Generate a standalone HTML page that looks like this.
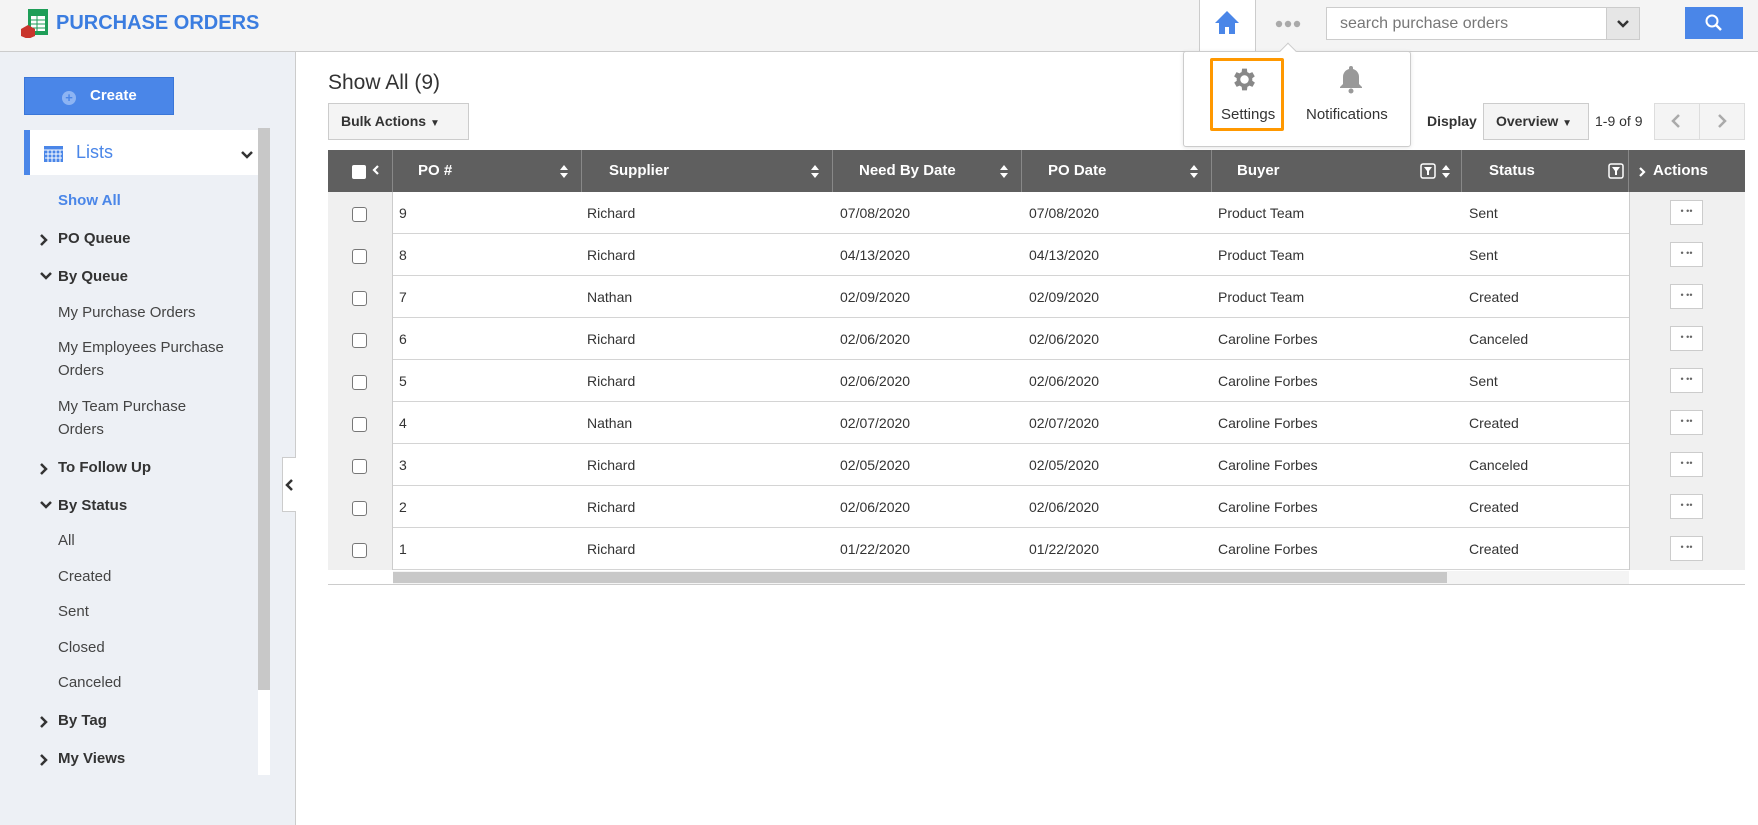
<!DOCTYPE html><html><head><style>
*{box-sizing:border-box;margin:0;padding:0}
body{width:1758px;height:825px;overflow:hidden;font-family:"Liberation Sans",Arial,sans-serif;background:#fff;position:relative;color:#333}
.a{position:absolute}
.hdr{left:0;top:0;width:1758px;height:52px;background:#f4f4f4;border-bottom:1px solid #ccc}
.side{left:0;top:52px;width:296px;height:773px;background:#edf0f5;border-right:1px solid #ccc}
.si{position:absolute;left:58px;font-size:15px;color:#444}
.sb{font-weight:bold;color:#333}
.chev{position:absolute;left:39px}
.th{top:150px;height:42px;background:#5f5f5f;color:#fff;font-weight:bold;font-size:15px;line-height:42px;border-right:1px solid #888}
.row{left:328px;width:1417px;height:42px;border-bottom:1px solid #d4d4d4;font-size:14px;line-height:42px}
.c{position:absolute;top:0}
.cb{position:absolute;left:24px;top:15px;width:15px;height:15px;border:1px solid #777;border-radius:3px;background:#fff}
.act{position:absolute;left:1301px;top:0;width:116px;height:42px;background:#f0f0f0;border-left:1px solid #ccc}
.ab{position:absolute;left:40px;top:8px;width:33px;height:25px;border:1px solid #ccc;background:#fff;font-size:9px;line-height:20px;text-align:center;color:#666}
.sort{position:absolute;top:15px}
</style></head><body>
<div class="a hdr"></div>
<svg class="a" style="left:20px;top:8px" width="30" height="30"><rect x="8" y="1" width="20" height="26" fill="#1e9e58"/><rect x="11" y="8" width="14" height="15" fill="#fff"/><path d="M11 12h14M11 16h14M11 20h14M17 8v15" stroke="#1e9e58"/><path d="M1 21l7-4 7 4v7l-7 3-7-3z" fill="#c9352c"/></svg>
<div class="a" style="left:56px;top:12px;font-size:20px;font-weight:bold;color:#3b7de0">PURCHASE ORDERS</div>
<div class="a" style="left:1199px;top:0;width:57px;height:53px;background:#fff;border-left:1px solid #ccc;border-right:1px solid #ccc"></div>
<svg class="a" style="left:1213px;top:9px" width="28" height="28"><path d="M14 2L2 14h4v11h6v-7h4v7h6V14h4z" fill="#4a86e8"/></svg>
<svg class="a" style="left:1275px;top:20px" width="26" height="8"><circle cx="4" cy="4" r="3.2" fill="#aaa"/><circle cx="13" cy="4" r="3.2" fill="#aaa"/><circle cx="22" cy="4" r="3.2" fill="#aaa"/></svg>
<div class="a" style="left:1326px;top:7px;width:314px;height:33px;border:1px solid #ccc;background:#fff;font-size:16px;color:#777;line-height:31px;padding-left:13px">search purchase orders</div>
<div class="a" style="left:1606px;top:8px;width:33px;height:31px;background:#e6e6e6;border-left:1px solid #ccc"></div>
<svg class="a" style="left:1616px;top:19px" width="14" height="10"><path d="M2 2l5 5 5-5" stroke="#333" stroke-width="2.5" fill="none"/></svg>
<div class="a" style="left:1685px;top:7px;width:58px;height:32px;background:#4a86e8"></div>
<svg class="a" style="left:1704px;top:13px" width="20" height="20"><circle cx="8" cy="8" r="5.5" stroke="#fff" stroke-width="2" fill="none"/><path d="M12 12l5 5" stroke="#fff" stroke-width="2.5"/></svg>

<div class="a side"></div>
<div class="a" style="left:24px;top:77px;width:150px;height:38px;background:#4a86e8;border:1px solid #3a76d8;color:#fff;font-weight:bold;font-size:15px;line-height:36px"><span style="display:inline-block;margin-left:37px;width:14px;height:14px;border-radius:7px;background:#8db4f3;vertical-align:-2px;color:#4a86e8;font-size:13px;line-height:14px;text-align:center">+</span><span style="margin-left:14px">Create</span></div>
<div class="a" style="left:24px;top:130px;width:234px;height:45px;background:#fff;border-left:6px solid #4a86e8"></div>
<svg class="a" style="left:44px;top:146px" width="19" height="16"><rect width="19" height="16" fill="#4a86e8"/><path d="M0 4h19M1 8h17M1 12h17M4 4v12M8 4v12M12 4v12M16 4v12" stroke="#fff" stroke-width="1"/></svg>
<div class="a" style="left:76px;top:142px;font-size:18px;color:#4a86e8">Lists</div>
<svg class="a" style="left:240px;top:150px" width="14" height="10"><path d="M2 2l5 5 5-5" stroke="#333" stroke-width="2.5" fill="none"/></svg>
<div class="a" style="left:258px;top:128px;width:12px;height:647px;background:#fff"></div>
<div class="a" style="left:258px;top:128px;width:12px;height:562px;background:#c8c8c8"></div>
<div class="si sb" style="top:192px;color:#4a86e8">Show All</div>
<svg class="chev" style="top:233px" width="10" height="14"><path d="M2 2l5 5-5 5" stroke="#333" stroke-width="2.5" fill="none"/></svg><div class="si sb" style="top:230px">PO Queue</div>
<svg class="chev" style="top:271px" width="14" height="10"><path d="M2 2l5 5 5-5" stroke="#333" stroke-width="2.5" fill="none"/></svg><div class="si sb" style="top:268px">By Queue</div>
<div class="si" style="top:304px">My Purchase Orders</div>
<div class="si" style="top:339px">My Employees Purchase</div><div class="si" style="top:362px">Orders</div>
<div class="si" style="top:398px">My Team Purchase</div><div class="si" style="top:421px">Orders</div>
<svg class="chev" style="top:462px" width="10" height="14"><path d="M2 2l5 5-5 5" stroke="#333" stroke-width="2.5" fill="none"/></svg><div class="si sb" style="top:459px">To Follow Up</div>
<svg class="chev" style="top:500px" width="14" height="10"><path d="M2 2l5 5 5-5" stroke="#333" stroke-width="2.5" fill="none"/></svg><div class="si sb" style="top:497px">By Status</div>
<div class="si" style="top:532px">All</div>
<div class="si" style="top:568px">Created</div>
<div class="si" style="top:603px">Sent</div>
<div class="si" style="top:639px">Closed</div>
<div class="si" style="top:674px">Canceled</div>
<svg class="chev" style="top:715px" width="10" height="14"><path d="M2 2l5 5-5 5" stroke="#333" stroke-width="2.5" fill="none"/></svg><div class="si sb" style="top:712px">By Tag</div>
<svg class="chev" style="top:753px" width="10" height="14"><path d="M2 2l5 5-5 5" stroke="#333" stroke-width="2.5" fill="none"/></svg><div class="si sb" style="top:750px">My Views</div>
<div class="a" style="left:282px;top:457px;width:14px;height:55px;background:#fff;border:1px solid #ccc;border-right:none"></div>
<svg class="a" style="left:285px;top:478px" width="9" height="14"><path d="M7 2L2 7l5 5" stroke="#333" stroke-width="2.5" fill="none"/></svg>

<div class="a" style="left:328px;top:71px;font-size:21px;color:#333">Show All (9)</div>
<div class="a" style="left:328px;top:103px;width:141px;height:37px;background:#f4f4f4;border:1px solid #ccc;font-weight:bold;font-size:14px;line-height:35px;padding-left:12px">Bulk Actions <span style="font-size:10px">▼</span></div>
<div class="a" style="left:1427px;top:113px;font-weight:bold;font-size:14px">Display</div>
<div class="a" style="left:1483px;top:103px;width:106px;height:37px;background:#f4f4f4;border:1px solid #ccc;font-weight:bold;font-size:14px;line-height:35px;padding-left:12px">Overview <span style="font-size:10px">▼</span></div>
<div class="a" style="left:1595px;top:113px;font-size:14px">1-9 of 9</div>
<div class="a" style="left:1654px;top:103px;width:91px;height:37px;background:#f4f4f4;border:1px solid #ddd"></div>
<div class="a" style="left:1699px;top:103px;width:1px;height:37px;background:#ddd"></div>
<svg class="a" style="left:1671px;top:113px" width="10" height="16"><path d="M8 2L2 8l6 6" stroke="#aaa" stroke-width="2.5" fill="none"/></svg>
<svg class="a" style="left:1717px;top:113px" width="10" height="16"><path d="M2 2l6 6-6 6" stroke="#aaa" stroke-width="2.5" fill="none"/></svg>

<div class="a th" style="left:328px;width:65px;"><div style="position:absolute;left:24px;top:15px;width:14px;height:14px;background:#fff;border-radius:2px"></div><svg style="position:absolute;left:44px;top:14px" width="8" height="12"><path d="M6 2L2 6l4 4" stroke="#fff" stroke-width="2.2" fill="none"/></svg></div>
<div class="a th" style="left:393px;width:189px;padding-left:25px">PO #<svg class="sort" style="right:12px" width="10" height="13"><path d="M5 0l4 5H1zM5 13l4-5H1z" fill="#fff"/></svg></div>
<div class="a th" style="left:582px;width:251px;padding-left:27px">Supplier<svg class="sort" style="right:12px" width="10" height="13"><path d="M5 0l4 5H1zM5 13l4-5H1z" fill="#fff"/></svg></div>
<div class="a th" style="left:833px;width:189px;padding-left:26px">Need By Date<svg class="sort" style="right:12px" width="10" height="13"><path d="M5 0l4 5H1zM5 13l4-5H1z" fill="#fff"/></svg></div>
<div class="a th" style="left:1022px;width:190px;padding-left:26px">PO Date<svg class="sort" style="right:12px" width="10" height="13"><path d="M5 0l4 5H1zM5 13l4-5H1z" fill="#fff"/></svg></div>
<div class="a th" style="left:1212px;width:250px;padding-left:25px">Buyer<svg class="sort" style="right:25px;top:13px" width="16" height="16"><rect x="1" y="1" width="14" height="14" rx="2" stroke="#fff" stroke-width="1.5" fill="none"/><path d="M4 4h8l-3 4v4H7V8z" fill="#fff"/></svg><svg class="sort" style="right:10px" width="10" height="13"><path d="M5 0l4 5H1zM5 13l4-5H1z" fill="#fff"/></svg></div>
<div class="a th" style="left:1462px;width:167px;padding-left:27px">Status<svg class="sort" style="right:4px;top:13px" width="16" height="16"><rect x="1" y="1" width="14" height="14" rx="2" stroke="#fff" stroke-width="1.5" fill="none"/><path d="M4 4h8l-3 4v4H7V8z" fill="#fff"/></svg></div>
<div class="a th" style="left:1629px;width:116px;padding-left:24px;border-right:none">Actions<svg style="position:absolute;left:9px;top:16px" width="8" height="12"><path d="M2 2l4 4-4 4" stroke="#fff" stroke-width="2.2" fill="none"/></svg></div>

<div id="rows"></div>
<div class="a" style="left:393px;top:571px;width:1236px;height:13px;background:#f4f4f4"></div>
<div class="a" style="left:393px;top:572px;width:1054px;height:11px;background:#c8c8c8"></div>
<div class="a" style="left:328px;top:584px;width:1417px;height:1px;background:#ccc"></div>

<div class="a" style="left:1183px;top:51px;width:228px;height:96px;background:#fff;border:1px solid #ccc;border-radius:3px;box-shadow:0 1px 4px rgba(0,0,0,.1)"></div>
<div class="a" style="left:1282px;top:45px;width:12px;height:12px;background:#fff;border-left:1px solid #ccc;border-top:1px solid #ccc;transform:rotate(45deg)"></div>
<div class="a" style="left:1210px;top:58px;width:74px;height:73px;border:3px solid #ff9800;border-radius:2px"></div>
<svg class="a" style="left:1230px;top:65px" width="29" height="29" viewBox="0 0 24 24"><path fill="#888" d="M19.4 13a7.5 7.5 0 000-2l2.1-1.6-2-3.5-2.5 1a7 7 0 00-1.7-1L15 3h-4l-.4 2.9a7 7 0 00-1.7 1l-2.5-1-2 3.5L6.6 11a7.5 7.5 0 000 2l-2.1 1.6 2 3.5 2.5-1a7 7 0 001.7 1L11 21h4l.4-2.9a7 7 0 001.7-1l2.5 1 2-3.5zM13 15.5a3.5 3.5 0 110-7 3.5 3.5 0 010 7z" transform="translate(-1 0)"/></svg>
<div class="a" style="left:1221px;top:106px;font-size:15px">Settings</div>
<svg class="a" style="left:1338px;top:64px" width="26" height="30" viewBox="0 0 26 30"><path fill="#999" d="M13 2a2 2 0 012 2v1a8 8 0 016 8v7l3 3v1H2v-1l3-3v-7a8 8 0 016-8V4a2 2 0 012-2z"/><circle cx="13" cy="27" r="2.5" fill="#999"/></svg>
<div class="a" style="left:1306px;top:106px;font-size:15px">Notifications</div>

<script>
var d=[["9","Richard","07/08/2020","07/08/2020","Product Team","Sent"],["8","Richard","04/13/2020","04/13/2020","Product Team","Sent"],["7","Nathan","02/09/2020","02/09/2020","Product Team","Created"],["6","Richard","02/06/2020","02/06/2020","Caroline Forbes","Canceled"],["5","Richard","02/06/2020","02/06/2020","Caroline Forbes","Sent"],["4","Nathan","02/07/2020","02/07/2020","Caroline Forbes","Created"],["3","Richard","02/05/2020","02/05/2020","Caroline Forbes","Canceled"],["2","Richard","02/06/2020","02/06/2020","Caroline Forbes","Created"],["1","Richard","01/22/2020","01/22/2020","Caroline Forbes","Created"]];
var xs=[71,259,512,701,890,1141],h="";
d.forEach(function(r,i){h+='<div class="a row" style="top:'+(192+i*42)+'px"><div class="c" style="left:0;width:65px;height:42px;background:#f0f0f0;border-right:1px solid #ccc"><div class="cb"></div></div>';
r.forEach(function(t,j){h+='<div class="c" style="left:'+xs[j]+'px">'+t+'</div>'});
h+='<div class="act"><div class="ab">• ••</div></div></div>'});
document.getElementById("rows").innerHTML=h;
</script>
</body></html>
